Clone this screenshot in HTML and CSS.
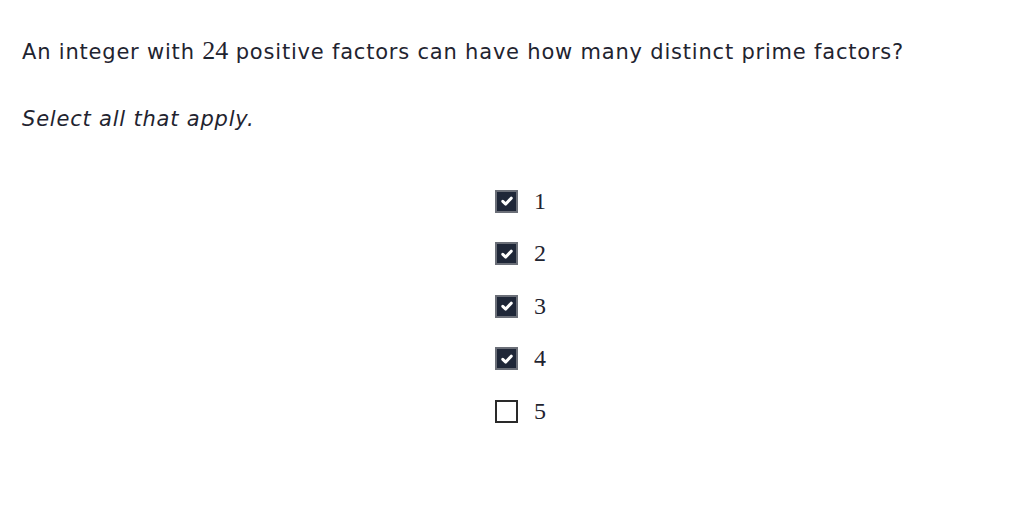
FILE: index.html
```html
<!DOCTYPE html>
<html lang="en">
<head>
  <meta charset="UTF-8">
  <title>Question</title>
  <link rel="stylesheet" href="styles.css">
</head>
<body>
  <div class="question">
    <p class="prompt">An integer with <span class="math">24</span> positive factors can have how many distinct prime factors?</p>
    <p class="hint">Select all that apply.</p>

    <ul class="choices">
      <li class="choice"><span class="box checked"><svg viewBox="0 0 12 12"><path d="M2.4 6.3 L4.9 8.6 L9.6 3.6" /></svg></span><span class="math">1</span></li>
      <li class="choice"><span class="box checked"><svg viewBox="0 0 12 12"><path d="M2.4 6.3 L4.9 8.6 L9.6 3.6" /></svg></span><span class="math">2</span></li>
      <li class="choice"><span class="box checked"><svg viewBox="0 0 12 12"><path d="M2.4 6.3 L4.9 8.6 L9.6 3.6" /></svg></span><span class="math">3</span></li>
      <li class="choice"><span class="box checked"><svg viewBox="0 0 12 12"><path d="M2.4 6.3 L4.9 8.6 L9.6 3.6" /></svg></span><span class="math">4</span></li>
      <li class="choice"><span class="box"></span><span class="math">5</span></li>
    </ul>
  </div>
</body>
</html>
```

FILE: styles.css
```css
body {
  margin: 0;
  background: #ffffff;
  color: #1f2430;
  font-family: "DejaVu Sans", "Open Sans", sans-serif;
}

.question {
  padding: 36px 22px;
}

.prompt {
  margin: 0;
  font-size: 21px;
  line-height: 30px;
  letter-spacing: 0.8px;
}

.hint {
  margin: 37px 0 0;
  font-size: 21px;
  line-height: 30px;
  font-style: italic;
  letter-spacing: 0.8px;
}

.math {
  font-family: "Liberation Serif", "DejaVu Serif", serif;
  font-size: 24px;
  letter-spacing: 0;
}

.prompt .math {
  font-size: 26px;
}

.choices {
  list-style: none;
  margin: 56px 0 0;
  padding: 0;
  display: flex;
  flex-direction: column;
  align-items: center;
  gap: 30.5px;
}

.choice {
  display: flex;
  align-items: center;
  gap: 16px;
  height: 22px;
  padding-left: 17px;
}

.box {
  width: 23px;
  height: 23px;
  box-sizing: border-box;
  border: 2px solid #2a2a2a;
  background: #fff;
  display: flex;
  align-items: center;
  justify-content: center;
}

.box.checked {
  background: #1f2738;
  border-color: #6b6f78;
}

.box svg {
  width: 14px;
  height: 14px;
  fill: none;
  stroke: #ffffff;
  stroke-width: 2.6;
  stroke-linecap: round;
  stroke-linejoin: round;
}
```
